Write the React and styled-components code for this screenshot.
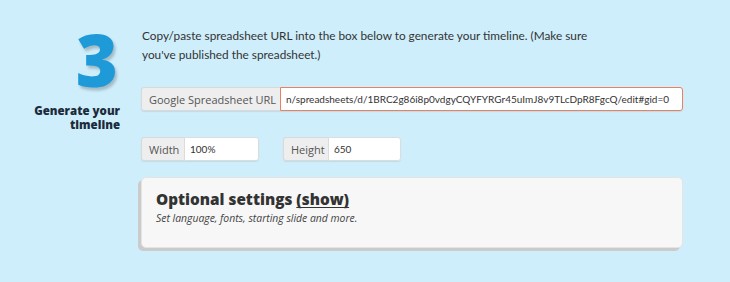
//------------------------------ MODULE -------------------------------------
import React from "react";
import styled, { createGlobalStyle } from "styled-components";

//------------------------------ CSS ----------------------------------------
const GlobalStyle = createGlobalStyle`
    html, body{
        margin:0;
        padding:0;
        background:#cfeefb;
    }
    body{
        font-family:"Open Sans", "Liberation Sans", sans-serif;
        color:#333;
    }
`;
const StyledPage = styled.div`
    width:730px;
    height:282px;
    display:flex;
    align-items:flex-start;
    box-sizing:border-box;
    padding-top:24px;
`;
const StyledStep = styled.div`
    width:120px;
    flex-shrink:0;
    display:flex;
    flex-direction:column;
    align-items:flex-end;
`;
const StyledStepNum = styled.div`
    font-family:"Open Sans", sans-serif;
    font-weight:800;
    font-size:72px;
    line-height:56px;
    height:56px;
    margin-top:7px;
    color:#1f9ad9;
    margin-right:2px;
    text-shadow:2px 3px 3px rgba(0,0,0,0.22);
`;
const StyledStepTitle = styled.div`
    font-family:"Open Sans", sans-serif;
    font-weight:800;
    font-size:11.5px;
    line-height:14px;
    color:#1c2b3b;
    text-align:right;
    margin-top:17px;
`;
const StyledBody = styled.div`
    width:542px;
    margin-left:21px;
    display:flex;
    flex-direction:column;
`;
const StyledIntro = styled.p`
    margin:2px 0 0 1px;
    max-width:452px;
    font-family:"Lato", sans-serif;
    font-size:11.8px;
    line-height:19px;
    color:#333;
`;
const StyledGroup = styled.div`
    display:flex;
    height:${p => p.h || 24}px;
    width:${p => p.w ? p.w + 'px' : '100%'};
    box-sizing:border-box;
    border-radius:3px;
    box-shadow:0 1px 1px rgba(0,0,0,0.08);
`;
const StyledAddon = styled.span`
    display:flex;
    align-items:center;
    box-sizing:border-box;
    width:${p => p.w}px;
    padding-left:7px;
    background:#eeeeee;
    border:1px solid #d9d9d9;
    border-right:none;
    border-radius:3px 0 0 3px;
    font-size:11px;
    color:#555;
`;
const StyledInput = styled.input`
    flex:1;
    min-width:0;
    box-sizing:border-box;
    height:100%;
    margin:0;
    padding:0 5px;
    background:#fff;
    border:1px solid ${p => p.focus ? '#e9805f' : '#dcdcdc'};
    border-radius:0 3px 3px 0;
    font-family:"Lato", sans-serif;
    font-size:10px;
    color:#333;
    outline:none;
`;
const StyledRow = styled.div`
    display:flex;
    gap:24px;
    margin-top:${p => p.mt}px;
`;
const StyledCard = styled.div`
    margin-top:16px;
    height:71px;
    box-sizing:border-box;
    padding:11px 14px;
    background:#f7f7f7;
    border:1px solid #e4e4e4;
    border-radius:5px;
    box-shadow:-3px 3px 0 #cbcbcb;
`;
const StyledCardTitle = styled.h3`
    margin:0;
    font-size:15.3px;
    line-height:20px;
    font-weight:800;
    color:#333;
`;
const StyledShow = styled.a`
    color:#333;
    text-decoration:underline;
    text-underline-offset:2px;
    cursor:pointer;
`;
const StyledCardDesc = styled.div`
    margin-top:2px;
    font-size:10.4px;
    font-style:italic;
    color:#444;
`;

//------------------------------ COMPONENT ----------------------------------
const App = () => {
    //render
    return(
        <StyledPage>
            <GlobalStyle />
            <StyledStep>
                <StyledStepNum>3</StyledStepNum>
                <StyledStepTitle>Generate your<br/>timeline</StyledStepTitle>
            </StyledStep>
            <StyledBody>
                <StyledIntro>
                    Copy/paste spreadsheet URL into the box below to generate your timeline. (Make sure you've published the spreadsheet.)
                </StyledIntro>
                <StyledRow mt={23}>
                    <StyledGroup h={24}>
                        <StyledAddon w={139}>Google Spreadsheet URL</StyledAddon>
                        <StyledInput focus readOnly value="n/spreadsheets/d/1BRC2g86i8p0vdgyCQYFYRGr45uImJ8v9TLcDpR8FgcQ/edit#gid=0" />
                    </StyledGroup>
                </StyledRow>
                <StyledRow mt={26}>
                    <StyledGroup h={24} w={118}>
                        <StyledAddon w={43}>Width</StyledAddon>
                        <StyledInput readOnly value="100%" />
                    </StyledGroup>
                    <StyledGroup h={24} w={118}>
                        <StyledAddon w={45}>Height</StyledAddon>
                        <StyledInput readOnly value="650" />
                    </StyledGroup>
                </StyledRow>
                <StyledCard>
                    <StyledCardTitle>Optional settings <StyledShow>(show)</StyledShow></StyledCardTitle>
                    <StyledCardDesc>Set language, fonts, starting slide and more.</StyledCardDesc>
                </StyledCard>
            </StyledBody>
        </StyledPage>
    )
}

export default App;
